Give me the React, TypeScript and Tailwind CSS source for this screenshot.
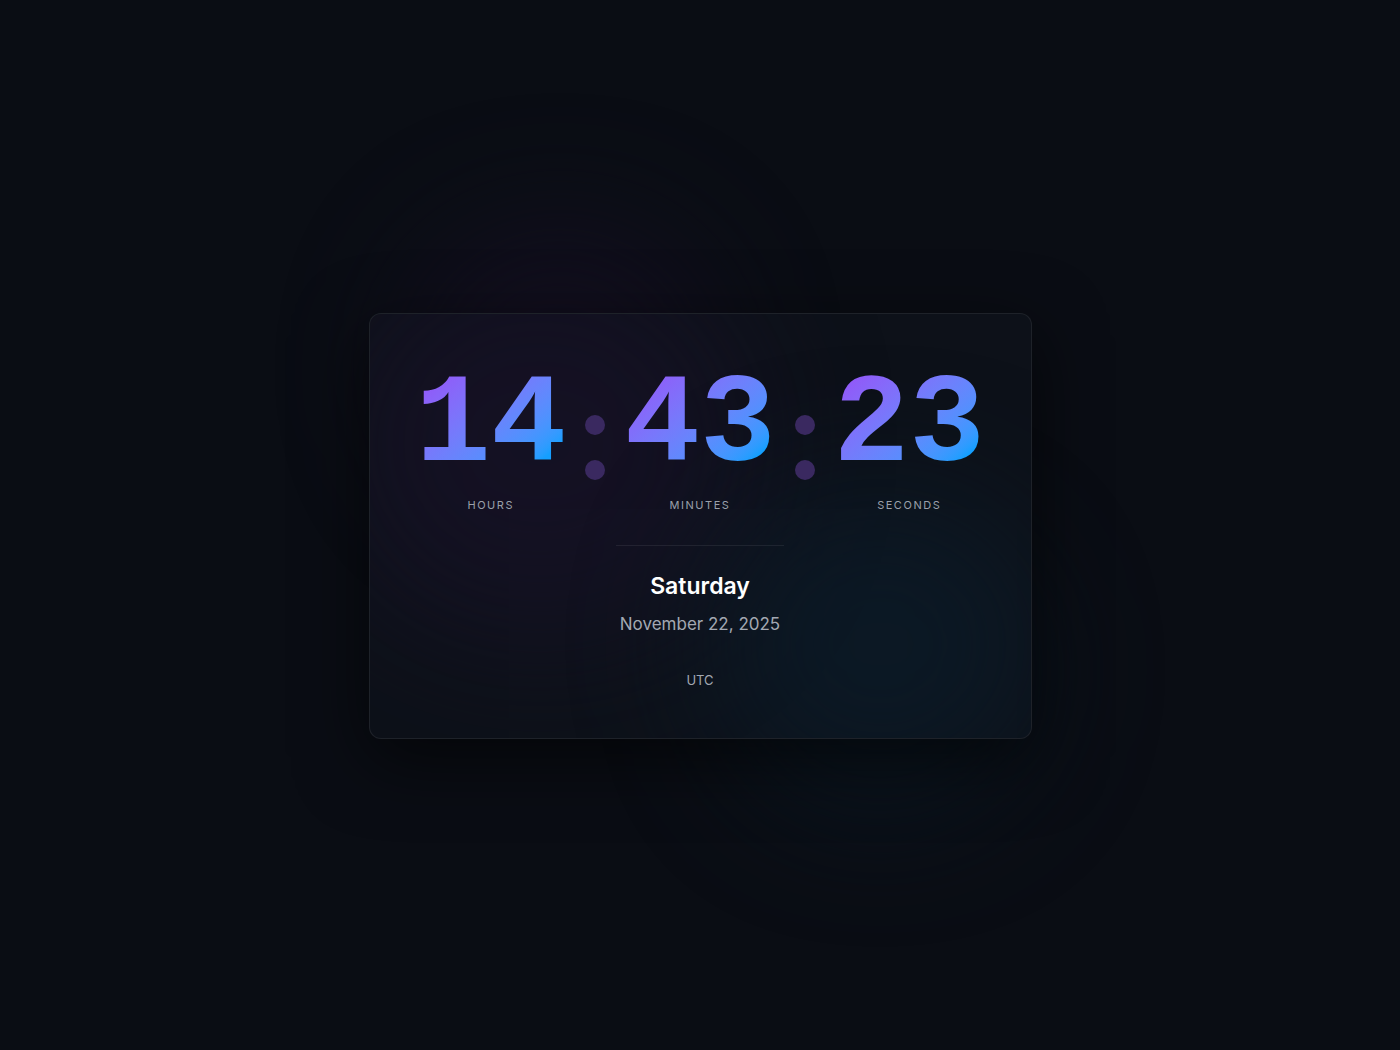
import React from 'react';

const digitFont = { fontFamily: '"Liberation Mono", "DejaVu Sans Mono", monospace' };

function Unit({ value, label }: { value: string; label: string }) {
  return (
    <div className="flex flex-col items-center">
      <div
        style={digitFont}
        className="bg-gradient-to-br from-[#9257f8] from-10% to-[#159fff] to-80% bg-clip-text text-[126px] font-bold leading-none text-transparent"
      >
        {value}
      </div>
      <div className="mt-[7px] text-[11px] leading-[16px] tracking-[0.14em] text-[#9aa0ab]">{label}</div>
    </div>
  );
}

function Colon() {
  return (
    <div className="flex flex-col items-center gap-[25px] pt-[51px]">
      <span className="h-[20px] w-[20px] rounded-full bg-[#3a2960]" />
      <span className="h-[20px] w-[20px] rounded-full bg-[#3a2960]" />
    </div>
  );
}

export default function App() {
  return (
    <div
      className="relative flex h-[1050px] w-full items-center justify-center overflow-hidden bg-[#0a0d14]"
      style={{ fontFamily: 'Inter, "Noto Sans", sans-serif' }}
    >
      {/* ambient glows */}
      <div className="pointer-events-none absolute left-[400px] top-[220px] h-[300px] w-[320px] rounded-full bg-[#150f22] opacity-70 blur-[60px]" />
      <div className="pointer-events-none absolute left-[720px] top-[520px] h-[300px] w-[320px] rounded-full bg-[#0a1722] opacity-70 blur-[60px]" />

      <div className="relative mt-[1px] flex h-[426px] w-[663px] flex-col items-center overflow-hidden rounded-xl border border-white/[0.07] bg-[#0d1119] shadow-[0_20px_70px_rgba(0,0,0,0.6)]">
        <div className="pointer-events-none absolute -left-[40px] -top-[60px] h-[380px] w-[420px] rounded-full bg-[#181228] opacity-70 blur-[70px]" />
        <div className="pointer-events-none absolute right-[-20px] top-[180px] h-[300px] w-[340px] rounded-full bg-[#0b1c2a] opacity-70 blur-[70px]" />

        <div className="relative mt-[50px] flex items-start gap-[19px]">
          <Unit value="14" label="HOURS" />
          <Colon />
          <Unit value="43" label="MINUTES" />
          <Colon />
          <Unit value="23" label="SECONDS" />
        </div>

        <div className="relative mt-[32px] h-px w-[168px] bg-white/[0.07]" />

        <div className="relative mt-[25px] text-[23px] font-semibold leading-[30px] text-white">Saturday</div>
        <div className="relative mt-[11px] text-[17px] leading-[24px] text-[#a3a8b2]">November 22, 2025</div>
        <div className="relative mt-[35px] text-[13px] leading-[18px] text-[#a3a8b2]">UTC</div>
      </div>
    </div>
  );
}
